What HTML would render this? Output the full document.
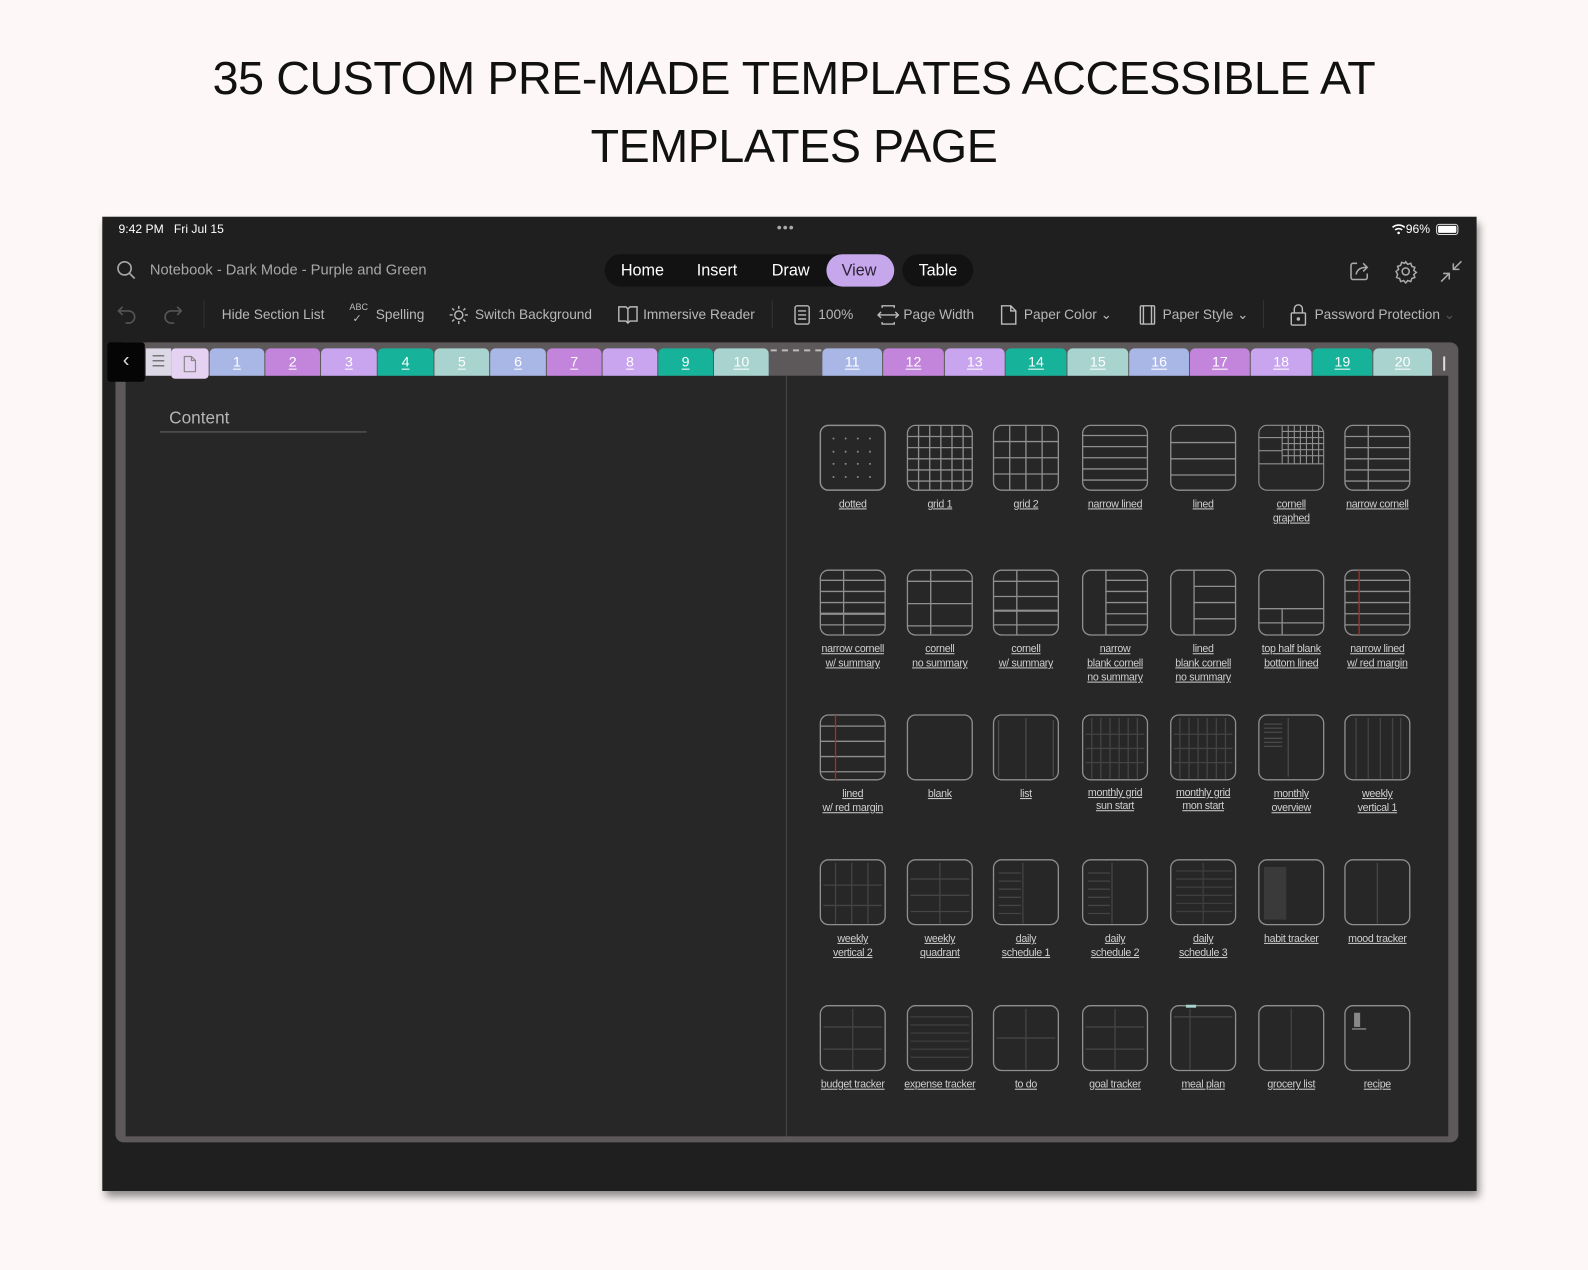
<!DOCTYPE html>
<html><head><meta charset="utf-8"><style>
*{margin:0;padding:0;box-sizing:border-box}
html,body{width:1588px;height:1270px;overflow:hidden;background:#fdf8f7}
#w{position:absolute;left:0;top:0;width:1568px;height:1254px;transform:scale(1.01276);transform-origin:0 0;font-family:"Liberation Sans",sans-serif}
.t{position:absolute;left:0;width:1568px;text-align:center;font-size:46px;color:#111;letter-spacing:-0.4px}
#scr{position:absolute;left:101px;top:214px;width:1357px;height:962px;background:#1f1f1f;box-shadow:3px 6px 8px rgba(0,0,0,.45)}
.a{position:absolute;white-space:nowrap}
.tb{color:#b8b8b8;font-size:13.5px;top:89px}
.tab{position:absolute;top:130px;height:27px;border-radius:5px 5px 0 0;text-align:center;color:#fff;font-size:14px;line-height:27px}
.tab span{text-decoration:underline;text-underline-offset:2px}
.c{position:absolute;width:120px;text-align:center}
.c svg{display:block;margin:0 auto}
.c div{margin-top:6px;font-size:10.5px;line-height:14px;color:#cfcfcf;text-decoration:underline;letter-spacing:-0.3px}
</style></head><body><div id="w">
<div class="t" style="top:50px">35 CUSTOM PRE-MADE TEMPLATES ACCESSIBLE AT</div>
<div class="t" style="top:117px">TEMPLATES PAGE</div>
<div id="scr">
 <div class="a" style="left:16px;top:5px;color:#fff;font-size:12px">9:42 PM&nbsp;&nbsp; Fri Jul 15</div>
 <div class="a" style="left:666px;top:2px;color:#aaa;font-size:14px;letter-spacing:1px">•••</div>
 <svg class="a" style="left:1273px;top:6px" width="14" height="12" fill="none" stroke="#fff" stroke-width="1.6"><path d="M1 4.5a9 9 0 0 1 12 0M3.5 7a5.5 5.5 0 0 1 7 0"/><circle cx="7" cy="10" r="1.3" fill="#fff" stroke="none"/></svg>
 <div class="a" style="left:1287px;top:5px;color:#fff;font-size:12px">96%</div>
 <div class="a" style="left:1317px;top:7px;width:22px;height:11px;border:1px solid #ddd;border-radius:3px;padding:1px"><div style="width:100%;height:100%;background:#fff;border-radius:1px"></div></div>
 <svg class="a" style="left:14px;top:43px" width="20" height="20"><circle cx="8" cy="8" r="6.5" fill="none" stroke="#aaa" stroke-width="1.6"/><path d="M13 13l5 5" stroke="#aaa" stroke-width="1.6"/></svg>
 <div class="a" style="left:47px;top:45px;color:#a8a8a8;font-size:14.5px">Notebook - Dark Mode - Purple and Green</div>
 <div class="a" style="left:496px;top:37px;width:286px;height:32px;background:#121212;border-radius:16px"></div>
 <div class="a" style="left:790px;top:37px;width:70px;height:32px;background:#121212;border-radius:16px"></div>
 <div class="a" style="left:715px;top:37px;width:67px;height:32px;background:#c6a7ec;border-radius:16px"></div>
 <div class="a" style="left:512px;top:45px;color:#fff;font-size:16px">Home</div>
 <div class="a" style="left:587px;top:45px;color:#fff;font-size:16px">Insert</div>
 <div class="a" style="left:661px;top:45px;color:#fff;font-size:16px">Draw</div>
 <div class="a" style="left:730px;top:45px;color:#2a2333;font-size:16px">View</div>
 <div class="a" style="left:806px;top:45px;color:#fff;font-size:16px">Table</div>
 <svg class="a" style="left:1230px;top:42px" width="24" height="24" fill="none" stroke="#aaa" stroke-width="1.5"><path d="M9 4H5a2 2 0 0 0-2 2v12a2 2 0 0 0 2 2h12a2 2 0 0 0 2-2v-4"/><path d="M8 15c1-5 5-7 10-7M15 4l4 4-4 4"/></svg>
 <svg class="a" style="left:1275px;top:42px" width="24" height="24" fill="none" stroke="#aaa" stroke-width="1.5"><circle cx="12" cy="12" r="3.5"/><path d="M12 2.5l2 2.5 3-1 1 3 3 1-1 3 2.5 2-2.5 2 1 3-3 1-1 3-3-1-2 2.5-2-2.5-3 1-1-3-3-1 1-3L2.5 12 5 10 4 7l3-1 1-3 3 1z"/></svg>
 <svg class="a" style="left:1320px;top:42px" width="24" height="24" fill="none" stroke="#aaa" stroke-width="1.5"><path d="M22 2l-8 8M14 4v6h6M2 22l8-8M4 14h6v6"/></svg>
 <svg class="a" style="left:14px;top:86px" width="22" height="20" fill="none" stroke="#555" stroke-width="1.6"><path d="M6 3L2 7l4 4M2 7h10a6 6 0 0 1 0 12H9"/></svg>
 <svg class="a" style="left:58px;top:86px" width="22" height="20" fill="none" stroke="#555" stroke-width="1.6"><path d="M16 3l4 4-4 4M20 7H10a6 6 0 0 0 0 12h3"/></svg>
 <div class="a" style="left:100px;top:82px;width:1px;height:28px;background:#333"></div>
 <div class="a tb" style="left:118px">Hide Section List</div>
 <div class="a" style="left:244px;top:84px;color:#bbb;font-size:9px">ABC<br><span style="font-size:11px;margin-left:3px">✓</span></div>
 <div class="a tb" style="left:270px">Spelling</div>
 <svg class="a" style="left:342px;top:87px" width="20" height="20" fill="none" stroke="#bbb" stroke-width="1.4"><circle cx="10" cy="10" r="4"/><path d="M10 1v3M10 16v3M1 10h3M16 10h3M3.5 3.5l2 2M14.5 14.5l2 2M3.5 16.5l2-2M14.5 5.5l2-2"/></svg>
 <div class="a tb" style="left:368px">Switch Background</div>
 <svg class="a" style="left:508px;top:87px" width="22" height="20" fill="none" stroke="#bbb" stroke-width="1.4"><path d="M2 2h7l2 2 2-2h7v14h-7l-2 2-2-2H2zM11 4v14"/></svg>
 <div class="a tb" style="left:534px">Immersive Reader</div>
 <div class="a" style="left:661px;top:82px;width:1px;height:28px;background:#333"></div>
 <svg class="a" style="left:682px;top:86px" width="18" height="22" fill="none" stroke="#bbb" stroke-width="1.4"><rect x="2" y="2" width="14" height="18" rx="2"/><path d="M5 7h8M5 11h8M5 15h8"/></svg>
 <div class="a tb" style="left:707px">100%</div>
 <svg class="a" style="left:764px;top:86px" width="24" height="22" fill="none" stroke="#bbb" stroke-width="1.4"><path d="M6 4V2h12v2M6 18v2h12v-2M3 11h18M5 8l-3 3 3 3M19 8l3 3-3 3"/></svg>
 <div class="a tb" style="left:791px">Page Width</div>
 <svg class="a" style="left:886px;top:86px" width="18" height="22" fill="none" stroke="#bbb" stroke-width="1.4"><path d="M2 2h9l5 5v13H2zM11 2v5h5"/></svg>
 <div class="a tb" style="left:910px">Paper Color ⌄</div>
 <svg class="a" style="left:1023px;top:86px" width="18" height="22" fill="none" stroke="#bbb" stroke-width="1.4"><rect x="2" y="2" width="14" height="18" rx="1"/><path d="M5 2v18M13 2v18"/></svg>
 <div class="a tb" style="left:1047px">Paper Style ⌄</div>
 <div class="a" style="left:1146px;top:82px;width:1px;height:28px;background:#333"></div>
 <svg class="a" style="left:1172px;top:85px" width="18" height="24" fill="none" stroke="#bbb" stroke-width="1.4"><rect x="2" y="10" width="14" height="12" rx="1"/><path d="M5 10V6a4 4 0 0 1 8 0v4"/><circle cx="9" cy="16" r="1" fill="#bbb"/></svg>
 <div class="a tb" style="left:1197px">Password Protection <span style="color:#555">⌄</span></div>
 <div class="a" style="left:13px;top:124px;width:1326px;height:790px;background:#5d585a;border-radius:8px"></div>
 <div class="a" style="left:23px;top:157px;width:1306px;height:751px;background:#272727"></div>
 <div class="a" style="left:675px;top:157px;width:1px;height:751px;background:#4a4a4a"></div>
 <div class="a" style="left:660px;top:131px;width:50px;height:2px;border-top:2px dashed #bbb"></div>
 <div class="a" style="left:5px;top:124px;width:37px;height:39px;background:#050505;border-radius:3px;color:#ddd;font-size:20px;text-align:center;line-height:37px">&#8249;</div>
 <div class="a" style="left:43px;top:130px;width:25px;height:27px;background:#dcd8e6;color:#777;font-size:16px;text-align:center;line-height:27px">☰</div>
 <div class="a" style="left:68px;top:130px;width:37px;height:30px;background:#e5d2f2;border-radius:4px"><svg width="37" height="30" fill="none" stroke="#888" stroke-width="1.2"><path d="M13 8h7l4 4v11H13zM20 8v4h4"/></svg></div>
 <div class="tab" style="left:106px;width:54px;background:#a9b7e6"><span>1</span></div>
 <div class="tab" style="left:161px;width:54px;background:#c384db"><span>2</span></div>
 <div class="tab" style="left:216px;width:55px;background:#c9a5f0"><span>3</span></div>
 <div class="tab" style="left:272px;width:55px;background:#17b29a"><span>4</span></div>
 <div class="tab" style="left:328px;width:54px;background:#a8d3cf"><span>5</span></div>
 <div class="tab" style="left:383px;width:55px;background:#a9b7e6"><span>6</span></div>
 <div class="tab" style="left:439px;width:54px;background:#c384db"><span>7</span></div>
 <div class="tab" style="left:494px;width:54px;background:#c9a5f0"><span>8</span></div>
 <div class="tab" style="left:549px;width:54px;background:#17b29a"><span>9</span></div>
 <div class="tab" style="left:604px;width:54px;background:#a8d3cf"><span>10</span></div>
 <div class="tab" style="left:711px;width:59px;background:#a9b7e6"><span>11</span></div>
 <div class="tab" style="left:771px;width:60px;background:#c384db"><span>12</span></div>
 <div class="tab" style="left:832px;width:59px;background:#c9a5f0"><span>13</span></div>
 <div class="tab" style="left:892px;width:60px;background:#17b29a"><span>14</span></div>
 <div class="tab" style="left:953px;width:60px;background:#a8d3cf"><span>15</span></div>
 <div class="tab" style="left:1014px;width:59px;background:#a9b7e6"><span>16</span></div>
 <div class="tab" style="left:1074px;width:59px;background:#c384db"><span>17</span></div>
 <div class="tab" style="left:1134px;width:60px;background:#c9a5f0"><span>18</span></div>
 <div class="tab" style="left:1195px;width:59px;background:#17b29a"><span>19</span></div>
 <div class="tab" style="left:1255px;width:58px;background:#a8d3cf"><span>20</span></div>
 <div class="a" style="left:1324px;top:138px;width:2px;height:14px;background:#ddd"></div>
 <div class="a" style="left:66px;top:189px;color:#b5b5b5;font-size:17px">Content</div>
 <div class="a" style="left:57px;top:212px;width:204px;height:1px;background:#666"></div>
</div>
<div class="c" style="left:782px;top:419px"><svg width="66" height="66" stroke="#8f8f8f" fill="none" stroke-width="1.5"><rect x="1" y="1" width="64" height="64" rx="8"/><g fill="#888" stroke="none"><circle cx="14" cy="14" r="1"/><circle cx="26" cy="14" r="1"/><circle cx="38" cy="14" r="1"/><circle cx="50" cy="14" r="1"/><circle cx="14" cy="27" r="1"/><circle cx="26" cy="27" r="1"/><circle cx="38" cy="27" r="1"/><circle cx="50" cy="27" r="1"/><circle cx="14" cy="39" r="1"/><circle cx="26" cy="39" r="1"/><circle cx="38" cy="39" r="1"/><circle cx="50" cy="39" r="1"/><circle cx="14" cy="52" r="1"/><circle cx="26" cy="52" r="1"/><circle cx="38" cy="52" r="1"/><circle cx="50" cy="52" r="1"/></g></svg><div>dotted</div></div>
<div class="c" style="left:868px;top:419px"><svg width="66" height="66" stroke="#8f8f8f" fill="none" stroke-width="1.3"><rect x="1" y="1" width="64" height="64" rx="8"/><path d="M12 1v64M23 1v64M34 1v64M45 1v64M56 1v64M1 12h64M1 23h64M1 34h64M1 45h64M1 56h64"/></svg><div>grid 1</div></div>
<div class="c" style="left:953px;top:419px"><svg width="66" height="66" stroke="#8f8f8f" fill="none" stroke-width="1.3"><rect x="1" y="1" width="64" height="64" rx="8"/><path d="M17 1v64M33 1v64M49 1v64M1 17h64M1 33h64M1 49h64"/></svg><div>grid 2</div></div>
<div class="c" style="left:1041px;top:419px"><svg width="66" height="66" stroke="#8f8f8f" fill="none" stroke-width="1.3"><rect x="1" y="1" width="64" height="64" rx="8"/><path d="M1 11h64M1 22h64M1 33h64M1 44h64M1 55h64"/></svg><div>narrow lined</div></div>
<div class="c" style="left:1128px;top:419px"><svg width="66" height="66" stroke="#8f8f8f" fill="none" stroke-width="1.3"><rect x="1" y="1" width="64" height="64" rx="8"/><path d="M1 18h64M1 34h64M1 50h64"/></svg><div>lined</div></div>
<div class="c" style="left:1215px;top:419px"><svg width="66" height="66" stroke="#8f8f8f" fill="none" stroke-width="1.1"><rect x="1" y="1" width="64" height="64" rx="8"/><path d="M24 1v38M1 39h64M1 13h23M1 26h23M30 1v38M36 1v38M42 1v38M48 1v38M54 1v38M60 1v38M24 7h41M24 13h41M24 19h41M24 25h41M24 31h41"/></svg><div>cornell<br>graphed</div></div>
<div class="c" style="left:1300px;top:419px"><svg width="66" height="66" stroke="#8f8f8f" fill="none" stroke-width="1.3"><rect x="1" y="1" width="64" height="64" rx="8"/><path d="M24 1v64M1 12h64M1 23h64M1 34h64M1 45h64M1 56h64"/></svg><div>narrow cornell</div></div>

<div class="c" style="left:782px;top:562px"><svg width="66" height="66" stroke="#8f8f8f" fill="none" stroke-width="1.3"><rect x="1" y="1" width="64" height="64" rx="8"/><path d="M24 1v64M1 11h64M1 22h64M1 33h64M1 55h64"/><path d="M1 44h64" stroke-width="2.2"/></svg><div>narrow cornell<br>w/ summary</div></div>
<div class="c" style="left:868px;top:562px"><svg width="66" height="66" stroke="#8f8f8f" fill="none" stroke-width="1.3"><rect x="1" y="1" width="64" height="64" rx="8"/><path d="M24 1v64M1 12h64M1 34h64M1 56h64"/></svg><div>cornell<br>no summary</div></div>
<div class="c" style="left:953px;top:562px"><svg width="66" height="66" stroke="#8f8f8f" fill="none" stroke-width="1.3"><rect x="1" y="1" width="64" height="64" rx="8"/><path d="M24 1v64M1 12h64M1 27h64M1 55h64"/><path d="M1 41h64" stroke-width="2.2"/></svg><div>cornell<br>w/ summary</div></div>
<div class="c" style="left:1041px;top:562px"><svg width="66" height="66" stroke="#8f8f8f" fill="none" stroke-width="1.3"><rect x="1" y="1" width="64" height="64" rx="8"/><path d="M24 1v64M24 11h41M24 22h41M24 33h41M24 44h41M24 55h41"/></svg><div>narrow<br>blank cornell<br>no summary</div></div>
<div class="c" style="left:1128px;top:562px"><svg width="66" height="66" stroke="#8f8f8f" fill="none" stroke-width="1.3"><rect x="1" y="1" width="64" height="64" rx="8"/><path d="M24 1v64M24 17h41M24 33h41M24 49h41"/></svg><div>lined<br>blank cornell<br>no summary</div></div>
<div class="c" style="left:1215px;top:562px"><svg width="66" height="66" stroke="#8f8f8f" fill="none" stroke-width="1.3"><rect x="1" y="1" width="64" height="64" rx="8"/><path d="M1 39h64M1 53h64M24 39v26"/></svg><div>top half blank<br>bottom lined</div></div>
<div class="c" style="left:1300px;top:562px"><svg width="66" height="66" stroke="#8f8f8f" fill="none" stroke-width="1.3"><rect x="1" y="1" width="64" height="64" rx="8"/><path d="M1 11h64M1 22h64M1 33h64M1 44h64M1 55h64"/><path d="M15 1v64" stroke="#a0302e"/></svg><div>narrow lined<br>w/ red margin</div></div>

<div class="c" style="left:782px;top:705px"><svg width="66" height="66" stroke="#8f8f8f" fill="none" stroke-width="1.3"><rect x="1" y="1" width="64" height="64" rx="8"/><path d="M1 12h64M1 27h64M1 42h64M1 57h64"/><path d="M16 1v64" stroke="#b02a28"/></svg><div>lined<br>w/ red margin</div></div>
<div class="c" style="left:868px;top:705px"><svg width="66" height="66" stroke="#8f8f8f" fill="none" stroke-width="1.3"><rect x="1" y="1" width="64" height="64" rx="8"/></svg><div>blank</div></div>
<div class="c" style="left:953px;top:705px"><svg width="66" height="66" stroke="#8f8f8f" fill="none" stroke-width="1.3"><rect x="1" y="1" width="64" height="64" rx="8"/><path d="M33 4v60M6 6v56M60 6v56" stroke="#4a4a4a"/></svg><div>list</div></div>
<div class="c" style="left:1041px;top:705px"><svg width="66" height="66" stroke="#8f8f8f" fill="none" stroke-width="1.3"><rect x="1" y="1" width="64" height="64" rx="8"/><path d="M10 4v60M19 4v60M28 4v60M37 4v60M46 4v60M55 4v60M4 20h58M4 34h58M4 48h58" stroke="#444"/></svg><div style="line-height:13px">monthly grid<br>sun start</div></div>
<div class="c" style="left:1128px;top:705px"><svg width="66" height="66" stroke="#8f8f8f" fill="none" stroke-width="1.3"><rect x="1" y="1" width="64" height="64" rx="8"/><path d="M10 4v60M19 4v60M28 4v60M37 4v60M46 4v60M55 4v60M4 20h58M4 34h58M4 48h58" stroke="#444"/></svg><div style="line-height:13px">monthly grid<br>mon start</div></div>
<div class="c" style="left:1215px;top:705px"><svg width="66" height="66" stroke="#8f8f8f" fill="none" stroke-width="1.3"><rect x="1" y="1" width="64" height="64" rx="8"/><path d="M6 10h18M6 14h18M6 18h18M6 24h18M6 28h18M6 32h18M30 4v58" stroke="#4a4a4a"/></svg><div>monthly<br>overview</div></div>
<div class="c" style="left:1300px;top:705px"><svg width="66" height="66" stroke="#8f8f8f" fill="none" stroke-width="1.3"><rect x="1" y="1" width="64" height="64" rx="8"/><path d="M12 4v60M24 4v60M36 4v60M48 4v60M56 4v60" stroke="#444"/></svg><div>weekly<br>vertical 1</div></div>

<div class="c" style="left:782px;top:848px"><svg width="66" height="66" stroke="#8f8f8f" fill="none" stroke-width="1.3"><rect x="1" y="1" width="64" height="64" rx="8"/><path d="M16 4v60M32 4v60M48 4v60M4 26h58M4 46h58" stroke="#444"/></svg><div>weekly<br>vertical 2</div></div>
<div class="c" style="left:868px;top:848px"><svg width="66" height="66" stroke="#8f8f8f" fill="none" stroke-width="1.3"><rect x="1" y="1" width="64" height="64" rx="8"/><path d="M33 4v60M4 20h58M4 36h58M4 52h58" stroke="#444"/></svg><div>weekly<br>quadrant</div></div>
<div class="c" style="left:953px;top:848px"><svg width="66" height="66" stroke="#8f8f8f" fill="none" stroke-width="1.3"><rect x="1" y="1" width="64" height="64" rx="8"/><path d="M30 4v60M6 14h22M6 22h22M6 30h22M6 38h22M6 46h22M6 54h22" stroke="#444"/></svg><div>daily<br>schedule 1</div></div>
<div class="c" style="left:1041px;top:848px"><svg width="66" height="66" stroke="#8f8f8f" fill="none" stroke-width="1.3"><rect x="1" y="1" width="64" height="64" rx="8"/><path d="M30 4v60M6 14h22M6 22h22M6 30h22M6 38h22M6 46h22M6 54h22" stroke="#444"/></svg><div>daily<br>schedule 2</div></div>
<div class="c" style="left:1128px;top:848px"><svg width="66" height="66" stroke="#8f8f8f" fill="none" stroke-width="1.3"><rect x="1" y="1" width="64" height="64" rx="8"/><path d="M33 4v60M6 12h56M6 20h56M6 28h56M6 36h56M6 44h56M6 52h56" stroke="#3e3e3e"/></svg><div>daily<br>schedule 3</div></div>
<div class="c" style="left:1215px;top:848px"><svg width="66" height="66" stroke="#8f8f8f" fill="none" stroke-width="1.3"><rect x="1" y="1" width="64" height="64" rx="8"/><rect x="6" y="8" width="22" height="52" fill="#3a3a3a" stroke="none"/></svg><div>habit tracker</div></div>
<div class="c" style="left:1300px;top:848px"><svg width="66" height="66" stroke="#8f8f8f" fill="none" stroke-width="1.3"><rect x="1" y="1" width="64" height="64" rx="8"/><path d="M33 4v60" stroke="#444"/></svg><div>mood tracker</div></div>

<div class="c" style="left:782px;top:992px"><svg width="66" height="66" stroke="#8f8f8f" fill="none" stroke-width="1.3"><rect x="1" y="1" width="64" height="64" rx="8"/><path d="M33 4v60M4 22h58M4 44h58" stroke="#444"/></svg><div>budget tracker</div></div>
<div class="c" style="left:868px;top:992px"><svg width="66" height="66" stroke="#8f8f8f" fill="none" stroke-width="1.3"><rect x="1" y="1" width="64" height="64" rx="8"/><path d="M4 12h58M4 20h58M4 28h58M4 36h58M4 44h58M4 52h58" stroke="#3e3e3e"/></svg><div>expense tracker</div></div>
<div class="c" style="left:953px;top:992px"><svg width="66" height="66" stroke="#8f8f8f" fill="none" stroke-width="1.3"><rect x="1" y="1" width="64" height="64" rx="8"/><path d="M33 4v60M4 33h58" stroke="#444"/></svg><div>to do</div></div>
<div class="c" style="left:1041px;top:992px"><svg width="66" height="66" stroke="#8f8f8f" fill="none" stroke-width="1.3"><rect x="1" y="1" width="64" height="64" rx="8"/><path d="M33 4v60M4 22h58M4 44h58" stroke="#444"/></svg><div>goal tracker</div></div>
<div class="c" style="left:1128px;top:992px"><svg width="66" height="66" stroke="#8f8f8f" fill="none" stroke-width="1.3"><rect x="1" y="1" width="64" height="64" rx="8"/><rect x="16" y="0" width="10" height="3" fill="#a8d3cf" stroke="none"/><path d="M20 4v60M4 12h58" stroke="#444"/></svg><div>meal plan</div></div>
<div class="c" style="left:1215px;top:992px"><svg width="66" height="66" stroke="#8f8f8f" fill="none" stroke-width="1.3"><rect x="1" y="1" width="64" height="64" rx="8"/><path d="M33 4v60" stroke="#444"/></svg><div>grocery list</div></div>
<div class="c" style="left:1300px;top:992px"><svg width="66" height="66" stroke="#8f8f8f" fill="none" stroke-width="1.3"><rect x="1" y="1" width="64" height="64" rx="8"/><rect x="10" y="8" width="6" height="14" fill="#888" stroke="none"/><path d="M8 24h14" stroke="#888"/></svg><div>recipe</div></div>
</div></body></html>
